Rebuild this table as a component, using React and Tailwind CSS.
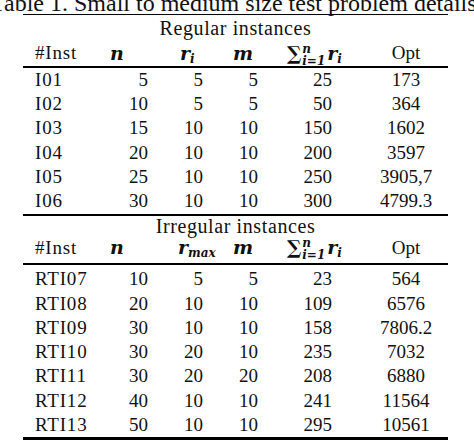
import React from 'react';

const regular = [
    ['I01', '5', '5', '5', '25', '173'],
    ['I02', '10', '5', '5', '50', '364'],
    ['I03', '15', '10', '10', '150', '1602'],
    ['I04', '20', '10', '10', '200', '3597'],
    ['I05', '25', '10', '10', '250', '3905,7'],
    ['I06', '30', '10', '10', '300', '4799.3'],
];

const irregular = [
    ['RTI07', '10', '5', '5', '23', '564'],
    ['RTI08', '20', '10', '10', '109', '6576'],
    ['RTI09', '30', '10', '10', '158', '7806.2'],
    ['RTI10', '30', '20', '10', '235', '7032'],
    ['RTI11', '30', '20', '20', '208', '6880'],
    ['RTI12', '40', '10', '10', '241', '11564'],
    ['RTI13', '50', '10', '10', '295', '10561'],
];

// math symbols in the header row
const Sym = ({ children }) => (
    <span className="font-['DejaVu_Serif',serif] font-bold italic text-[19px]">{children}</span>
);

const SumHead = () => (
    <span className="whitespace-nowrap">
        <span className="font-['DejaVu_Serif',serif] font-bold text-[19px]">∑</span>
        <span className="inline-flex flex-col align-[7px] -my-[5px] ml-[1px] mr-[2px] font-['DejaVu_Serif',serif] text-[12px] leading-[12px] font-bold italic">
            <span>n</span>
            <span>i=1</span>
        </span>
        <Sym>r</Sym>
        <sub className="font-['DejaVu_Serif',serif] font-bold italic text-[12px]">i</sub>
    </span>
);

const HeaderRow = ({ second }) => (
    <div
        className={`flex border-b-2 border-black ${
            second ? 'h-[29px] leading-[23px]' : 'h-[26.5px] leading-[24.5px]'
        }`}
    >
        <div className="w-[77px] pl-[12px] tracking-[0.8px]">#Inst</div>
        <div className="w-[48px] pl-[10px]">
            <Sym>n</Sym>
        </div>
        <div className={`w-[55px] whitespace-nowrap ${second ? 'pl-[30px]' : 'pl-[32px]'}`}>
            <Sym>r</Sym>
            <sub className="font-['DejaVu_Serif',serif] font-bold italic text-[12px]">{second ? 'max' : 'i'}</sub>
        </div>
        <div className="w-[55px] pl-[30px]">
            <Sym>m</Sym>
        </div>
        <div className="w-[74px] pl-[29px]">
            <SumHead />
        </div>
        <div className="w-[116px] pl-[32px] text-center">Opt</div>
    </div>
);

const DataRow = ({ row, h }) => (
    <div className={`flex ${h}`}>
        <div className="w-[77px] pl-[12px] tracking-[0.8px]">{row[0]}</div>
        <div className="w-[48px] text-right">{row[1]}</div>
        <div className="w-[55px] text-right">{row[2]}</div>
        <div className="w-[55px] text-right">{row[3]}</div>
        <div className="w-[74px] text-right">{row[4]}</div>
        <div className="w-[116px] pl-[32px] text-center">{row[5]}</div>
    </div>
);

export default function App() {
    return (
        <div className="w-[474px] h-[441px] overflow-hidden bg-white text-[#111] font-['Liberation_Serif',serif] text-[19px]">
            <div className="flex h-[14px]">
                <div className="-mt-[9px] -ml-[9px] whitespace-nowrap text-[24px] leading-[24px]">
                    Table 1. Small to medium size test problem details
                </div>
            </div>

            <div className="ml-[23px] w-[425px] border-t-[1.5px] border-black">
                <div className="h-[26px] leading-[26px] text-center text-[20px] tracking-[0.6px]">Regular instances</div>
                <HeaderRow />
                <div className="border-b-2 border-black">
                    {regular.map((r) => (
                        <DataRow key={r[0]} row={r} h="h-[24.4px] leading-[24.4px]" />
                    ))}
                </div>

                <div className="h-[20.5px] leading-[20.5px] text-center text-[20px] tracking-[0.6px]">Irregular instances</div>
                <HeaderRow second />
                <div className="pt-[1.9px] border-b-[3px] border-black">
                    {irregular.map((r) => (
                        <DataRow key={r[0]} row={r} h="h-[24.3px] leading-[24.3px]" />
                    ))}
                </div>
            </div>
        </div>
    );
}
